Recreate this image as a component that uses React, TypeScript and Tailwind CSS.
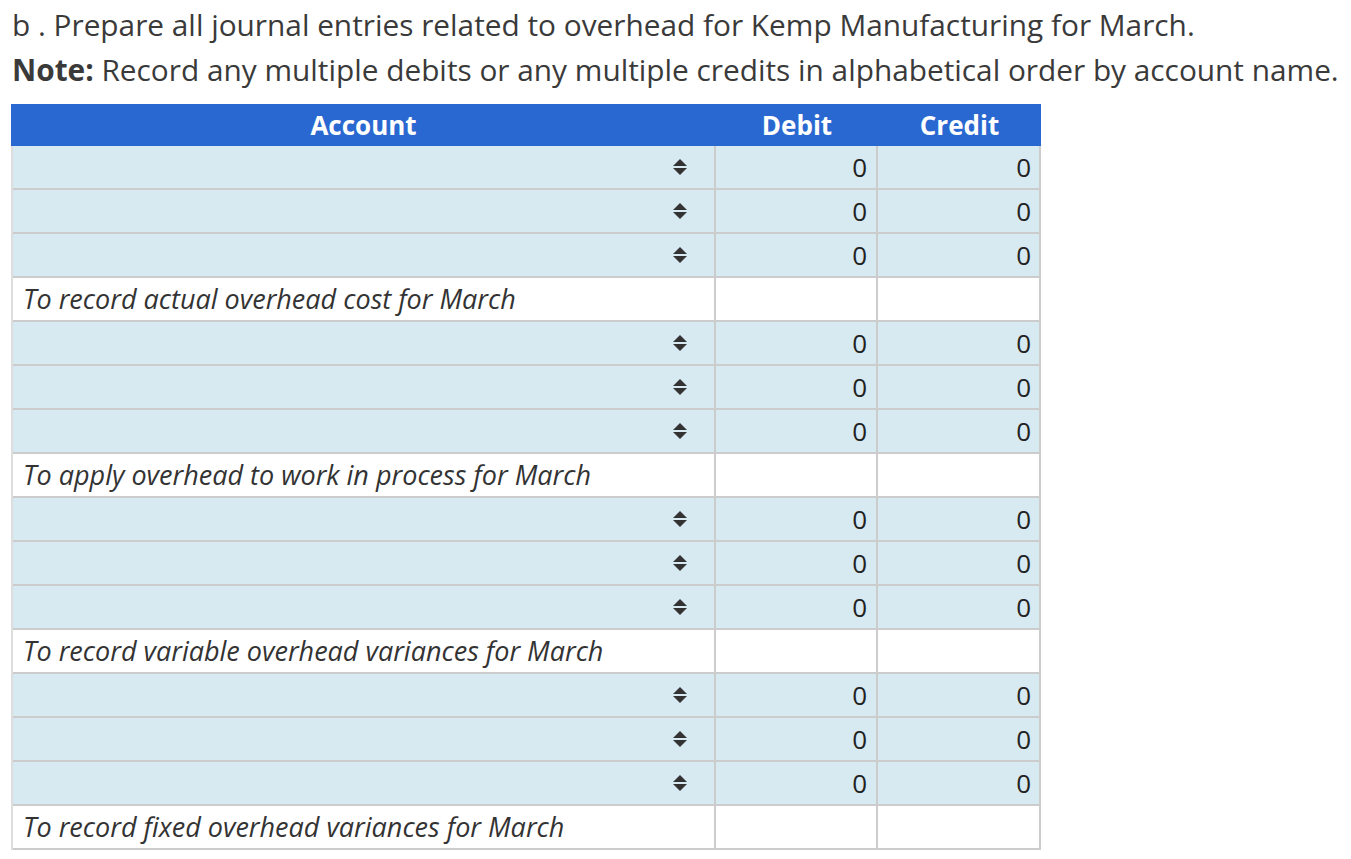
import React from "react";

const Sort = () => (
  <svg width="14" height="16" viewBox="0 0 14 16" className="block">
    <path d="M7 0 L14 7 L0 7 Z" fill="#333" />
    <path d="M0 9 L14 9 L7 16 Z" fill="#333" />
  </svg>
);

const groups = [
  "To record actual overhead cost for March",
  "To apply overhead to work in process for March",
  "To record variable overhead variances for March",
  "To record fixed overhead variances for March",
];

function EntryRow() {
  return (
    <div className="grid grid-cols-[703px_162px_163px] h-[44px] border-b-2 border-[#cccccc] bg-[#d7e9f1]">
      <div className="flex items-center justify-end pr-[27px] border-r-2 border-[#cccccc]">
        <Sort />
      </div>
      <div className="flex items-center justify-end pr-[9px] border-r-2 border-[#cccccc] text-[26px] text-[#222]">0</div>
      <div className="flex items-center justify-end pr-[10px] text-[26px] text-[#222]">0</div>
    </div>
  );
}

function LabelRow({ text }: { text: string }) {
  return (
    <div className="grid grid-cols-[703px_162px_163px] h-[44px] border-b-2 border-[#cccccc] bg-white">
      <div className="flex items-center pl-[10px] border-r-2 border-[#cccccc] italic text-[27px] text-[#333] whitespace-nowrap">{text}</div>
      <div className="border-r-2 border-[#cccccc]" />
      <div />
    </div>
  );
}

export default function App() {
  return (
    <div className="bg-white min-h-[859px] pt-[2px]" style={{ fontFamily: '"Open Sans", "Noto Sans", sans-serif' }}>
      <div className="pl-[12px] text-[29.8px] leading-[45px] text-[#3a3a3a] whitespace-nowrap">
        <div>b . Prepare all journal entries related to overhead for Kemp Manufacturing for March.</div>
        <div>
          <span className="font-bold">Note:</span> Record any multiple debits or any multiple credits in alphabetical order by account name.
        </div>
      </div>
      <div className="ml-[11px] mt-[12px] w-[1030px]">
        <div className="grid grid-cols-[705px_162px_163px] h-[42px] bg-[#2a68d1] text-white font-bold text-[26px]">
          <div className="flex items-center justify-center">Account</div>
          <div className="flex items-center justify-center">Debit</div>
          <div className="flex items-center justify-center">Credit</div>
        </div>
        <div className="border-l-2 border-l-[#dddddd] border-r-2 border-r-[#cccccc]">
          {groups.map((g) => (
            <React.Fragment key={g}>
              <EntryRow />
              <EntryRow />
              <EntryRow />
              <LabelRow text={g} />
            </React.Fragment>
          ))}
        </div>
      </div>
    </div>
  );
}
